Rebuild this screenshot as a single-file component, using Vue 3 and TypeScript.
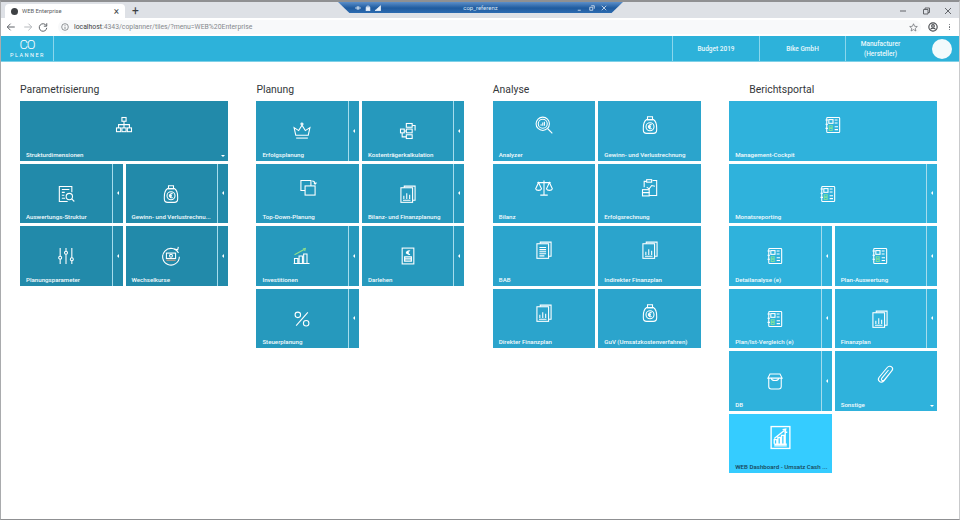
<script setup lang="ts">
type Tile = { label: string; icon: string; side?: boolean; caret?: boolean; wide?: boolean; accent?: boolean; big?: boolean }
type Column = { title: string; cls: string; indent?: boolean; tiles: Tile[] }

const icons: Record<string, string> = {
  tree: '<rect x="9.500" y="3" width="5" height="4.500"/><rect x="3" y="15.500" width="5" height="4.500"/><rect x="9.500" y="15.500" width="5" height="4.500"/><rect x="16" y="15.500" width="5" height="4.500"/><path d="M12 7.500v8M5.500 15.500v-4h13v4"/>',
  report: '<path d="M19 10V3H4v18h10"/><path d="M7 6.500h9M7 10h3.500M7 13.500h3M7 17h4"/><circle cx="16" cy="15" r="3.800"/><path d="M18.800 17.800l3.200 3.200"/>',
  bag: '<path d="M9 2h6v3.500H9z"/><path d="M8 5.500h8C18.500 7 20 11 20 15.500v2.500a4 4 0 0 1-4 4H8a4 4 0 0 1-4-4v-2.500C4 11 5.500 7 8 5.500z"/><circle cx="12" cy="14" r="4.800"/><path d="M14 11.800c-2-1-3.600.4-3.600 2.200s1.600 3.200 3.600 2.200M9.500 13.300h3.500M9.500 14.700h3.500"/>',
  sliders: '<path d="M5 2.500v19M12 2.500v19M19 2.500v19"/><circle cx="5" cy="14" r="1.800" fill="#228aaa"/><circle cx="12" cy="8" r="1.800" fill="#228aaa"/><circle cx="19" cy="16" r="1.800" fill="#228aaa"/>',
  fx: '<path d="M21 8.500A10 10 0 1 0 22 13"/><path d="M16 3.500l4 1 .8-3.500"/><rect x="6.500" y="8.500" width="11" height="6.500"/><circle cx="12" cy="11.700" r="1.700"/><path d="M6.500 17h11" stroke="#e0a080"/>',
  crown: '<path d="M4.500 17L2.500 8l5.500 3.500L12 5l4 6.500L21.500 8l-2 9z"/><path d="M5 20.500h14"/><circle cx="12" cy="3.500" r="1.200"/>',
  flow: '<rect x="10" y="3" width="7" height="4.500"/><rect x="10" y="9.700" width="7" height="4.500"/><rect x="10" y="16.500" width="7" height="4.500"/><rect x="3" y="9.700" width="4.500" height="4.500"/><path d="M17 5.300h3.500v6M7.500 12H10M5 14.500v4.500h5"/>',
  copy: '<path d="M8.500 15H3.500V3h12v6.500"/><rect x="8.500" y="9.500" width="12" height="11"/><path d="M17 3.500c2 0 3.300 1.300 3.500 3.500M19 5.500l1.500 1.800 1.700-1.800"/>',
  stack: '<path d="M7.500 4.500V2.500h13v17h-3"/><rect x="3.500" y="4.500" width="14" height="17.500"/><path d="M7 18v-4M10.500 18v-7M14 18v-5M6 19.500h9"/>',
  growth: '<path d="M3 21v-6h4v6zM8.500 21V12h4v9zM14 21V9.500h4V21zM2 21h19"/><path d="M3 10.500l12-6.500" stroke="#8fe08a"/><path d="M13 3.500l3-.5-.8 3" stroke="#8fe08a"/>',
  loan: '<rect x="5" y="2.500" width="14" height="19"/><path d="M14.500 6c-2-.8-3.500.3-3.500 1.900s1.500 2.700 3.500 1.900M9.500 7.300h3.500M9.500 8.500h3.500"/><path d="M8 13h8v5H8zM8 15.500h8" stroke-width="1.500"/>',
  percent: '<path d="M19 4L5 20"/><circle cx="7" cy="7" r="3.300"/><circle cx="17" cy="17" r="3.300"/>',
  analyzer: '<circle cx="10.500" cy="10.500" r="8"/><circle cx="10.500" cy="10.500" r="5.400"/><path d="M8.500 13v-2M10.500 13V9M12.500 13V8"/><path d="M16.500 16.500l5.500 5.500"/>',
  scale: '<path d="M12 3v17M7.500 20.500h9M4 5.500h16"/><path d="M5.500 5.500L2 13c.8 2.400 6.200 2.400 7 0zM18.500 5.500L15 13c.8 2.400 6.200 2.400 7 0z"/>',
  clip: '<path d="M8 4H5v7M15 3h5v18h-9"/><rect x="8" y="2" width="6" height="3"/><path d="M8 11l3 2 3-4 4 1"/><rect x="3" y="14" width="8" height="3.500"/><rect x="3" y="17.500" width="8" height="4"/>',
  doc: '<path d="M7.500 4.500V2.500h13v17h-3"/><rect x="3.500" y="4.500" width="14" height="17.500"/><path d="M6.500 9h8M6.500 11.500h8M6.500 14h8M6.500 16.500h8M6.500 19h6"/>',
  dash: '<rect x="4.500" y="3" width="15.500" height="18" rx="1"/><path d="M3 6h3M3 11h3M3 16h3"/><rect x="7" y="5.500" width="5" height="4.500"/><path d="M14 6h3.500M14 9.500h3.500M14 14h4M14 17.500h4"/><path d="M7.500 12.800h3.500v2.500H7.500zM7.500 16h3.500v2.500H7.500z" stroke="#7be0a0"/>',
  basket: '<path d="M6 3.500h12l2.500 5H3.500z"/><path d="M4.500 8.500v10a3 3 0 0 0 3 3h9a3 3 0 0 0 3-3v-10"/><path d="M7.500 8.500c.5 3.800 8.500 3.800 9 0"/>',
  paperclip: '<path d="M20 5.500L9.500 19c-1.400 1.800-4 2-5.400.7-1.500-1.300-1.500-3.400-.3-5L13.500 3c1.500-1.800 4-2 5.300-.8 1.500 1.300 1.300 3.300.2 4.700L9.800 18c-.8 1-2 1-2.800.3-.7-.7-.7-1.700 0-2.600l8-9.700"/>',
  board: '<rect x="3" y="1.500" width="18" height="21"/><path d="M6 18v-4h2.500v4M9.500 18v-6h2.500v6M13 18v-8h2.500v8M16.500 18V7h2M6 20h12M6 18.500h12M6 13l10-8"/><path d="M14 4.500l3-.5-.5 3"/>',
}

const columns: Column[] = [
  { title: 'Parametrisierung', cls: 'shade-1', tiles: [
    { label: 'Strukturdimensionen', icon: 'tree', wide: true, caret: true },
    { label: 'Auswertungs-Struktur', icon: 'report', side: true },
    { label: 'Gewinn- und Verlustrechnu...', icon: 'bag', side: true },
    { label: 'Planungsparameter', icon: 'sliders', side: true },
    { label: 'Wechselkurse', icon: 'fx', side: true },
  ] },
  { title: 'Planung', cls: 'shade-2', tiles: [
    { label: 'Erfolgsplanung', icon: 'crown', side: true },
    { label: 'Kostenträgerkalkulation', icon: 'flow', side: true },
    { label: 'Top-Down-Planung', icon: 'copy' },
    { label: 'Bilanz- und Finanzplanung', icon: 'stack', side: true },
    { label: 'Investitionen', icon: 'growth', side: true },
    { label: 'Darlehen', icon: 'loan', side: true },
    { label: 'Steuerplanung', icon: 'percent', side: true },
  ] },
  { title: 'Analyse', cls: 'shade-3', tiles: [
    { label: 'Analyzer', icon: 'analyzer' },
    { label: 'Gewinn- und Verlustrechnung', icon: 'bag' },
    { label: 'Bilanz', icon: 'scale' },
    { label: 'Erfolgsrechnung', icon: 'clip' },
    { label: 'BAB', icon: 'doc' },
    { label: 'Indirekter Finanzplan', icon: 'stack' },
    { label: 'Direkter Finanzplan', icon: 'stack' },
    { label: 'GuV (Umsatzkostenverfahren)', icon: 'bag' },
  ] },
  { title: 'Berichtsportal', cls: 'shade-4', indent: true, tiles: [
    { label: 'Management-Cockpit', icon: 'dash', wide: true },
    { label: 'Monatsreporting', icon: 'dash', wide: true, side: true },
    { label: 'Detailanalyse (e)', icon: 'dash', side: true },
    { label: 'Plan-Auswertung', icon: 'dash', side: true },
    { label: 'Plan/Ist-Vergleich (e)', icon: 'dash', side: true },
    { label: 'Finanzplan', icon: 'stack', side: true },
    { label: 'DB', icon: 'basket', side: true },
    { label: 'Sonstige', icon: 'paperclip', caret: true },
    { label: 'WEB Dashboard - Umsatz Cash ...', icon: 'board', accent: true, big: true },
  ] },
]
</script>

<template>
  <div class="window">
    <div class="tabstrip">
      <div class="tab">
        <span class="favicon"></span>
        <span class="tab-title">WEB Enterprise</span>
        <span class="tab-close">×</span>
      </div>
      <span class="tab-plus">+</span>
      <div class="winctl">
        <svg viewBox="0 0 8 8" width="8" height="8"><path d="M1 4h6" /></svg>
        <svg viewBox="0 0 8 8" width="8" height="8"><path d="M1.500 2.500h4.500v4.500h-4.500zM3 2.500V1h4.500v4.500H6" /></svg>
        <svg viewBox="0 0 8 8" width="8" height="8"><path d="M1 1l6 6M7 1l-6 6" /></svg>
      </div>
    </div>

    <div class="remote">
      <div class="remote-left">
        <svg viewBox="0 0 8 8" width="6" height="6"><path d="M0 4h8M3 1.500v5M5 1.500v5" /></svg>
        <svg viewBox="0 0 8 8" width="6" height="6"><rect x="1.500" y="3.500" width="5" height="4" class="solid" /><path d="M2.500 3.500V1.500h3v2" /></svg>
        <svg viewBox="0 0 8 8" width="6" height="6"><path d="M0 7.500L7.500 1v6.500z" class="solid" /></svg>
      </div>
      <span class="remote-title">cop_referenz</span>
      <div class="remote-right">
        <svg viewBox="0 0 8 8" width="6" height="6"><path d="M1 7h4" /></svg>
        <svg viewBox="0 0 8 8" width="6" height="6"><path d="M1 3h4v4H1zM3 1h4v4" /></svg>
        <svg viewBox="0 0 8 8" width="6" height="6"><path d="M1 1l6 6M7 1L1 7" /></svg>
      </div>
    </div>

    <div class="toolbar">
      <svg class="nav" viewBox="0 0 12 12" width="10" height="10"><path d="M10.500 6h-9M5.500 2l-4 4 4 4" /></svg>
      <svg class="nav off" viewBox="0 0 12 12" width="10" height="10"><path d="M1.500 6h9M6.500 2l4 4-4 4" /></svg>
      <svg class="nav reload" viewBox="0 0 12 12" width="10" height="10"><path d="M10 4.500A4.500 4.500 0 1 0 10.500 7M10.500 1.500v3.500H7" /></svg>
      <div class="omnibox">
        <svg class="info" viewBox="0 0 12 12" width="8" height="8"><circle cx="6" cy="6" r="5" /><path d="M6 5.500v3.500M6 3v1.200" /></svg>
        <span class="url"><b>localhost</b>:4343/coplanner/tiles/?menu=WEB%20Enterprise</span>
        <svg class="star" viewBox="0 0 12 12" width="9" height="9"><path d="M6 1l1.500 3.400 3.600.3-2.700 2.400.8 3.600L6 8.800l-3.200 1.900.8-3.600L.9 4.700l3.600-.3z" /></svg>
      </div>
      <svg class="nav profile" viewBox="0 0 12 12" width="10" height="10"><circle cx="6" cy="6" r="5" /><circle cx="6" cy="4.700" r="1.600" class="dark" /><path d="M2.800 9c1.500-2 4.900-2 6.400 0" /></svg>
      <span class="dots"><i></i><i></i><i></i></span>
    </div>

    <header class="appbar">
      <div class="logo">
        <span class="logo-co">CO</span>
        <span class="logo-name">PLANNER</span>
      </div>
      <div class="spacer"></div>
      <div class="cell budget">Budget 2019</div>
      <div class="cell firm">Bike GmbH</div>
      <div class="cell role">Manufacturer<br />(Hersteller)</div>
      <div class="avatar-wrap"><span class="avatar"></span></div>
    </header>

    <main class="board">
      <section v-for="col in columns" :key="col.title" class="column" :class="col.cls">
        <h2 class="col-title" :class="{ indented: col.indent }">{{ col.title }}</h2>
        <div class="tiles">
          <article
            v-for="tile in col.tiles"
            :key="tile.label"
            class="tile"
            :class="{ wide: tile.wide, accent: tile.accent, sided: tile.side }"
          >
            <div class="tile-main">
              <svg
                class="tile-icon"
                :class="{ big: tile.big }"
                viewBox="0 0 24 24"
                fill="none"
                stroke="#fff"
                stroke-width="1.300"
                v-html="icons[tile.icon]"
              ></svg>
              <span class="tile-label">{{ tile.label }}</span>
              <span v-if="tile.caret" class="caret-down"></span>
            </div>
            <div v-if="tile.side" class="tile-side"><span class="caret-left"></span></div>
          </article>
        </div>
      </section>
    </main>
  </div>
</template>

<style>
html, body { margin: 0; background: #fff; }
</style>

<style scoped>
.window {
  position: relative;
  width: 960px;
  height: 520px;
  box-sizing: border-box;
  overflow: hidden;
  background: #fff;
  border-top: 2px solid #8f9092;
  border-left: 1px solid #a9abad;
  border-right: 1px solid #c9cacc;
  border-bottom: 1px solid #8f9092;
  font-family: Roboto, "Liberation Sans", sans-serif;
  display: flex;
  flex-direction: column;
}

.tabstrip {
  height: 16px;
  background: #dee1e6;
  display: flex;
  align-items: flex-end;
  flex: none;
}
.tab {
  margin-left: 4px;
  width: 120px;
  height: 14px;
  box-sizing: border-box;
  background: #fff;
  border-radius: 4px 4px 0 0;
  display: flex;
  align-items: center;
  padding: 0 6px 0 6px;
  color: #5a5d61;
  font-size: 5.800px;
}
.favicon { width: 7px; height: 7px; border-radius: 50%; background: #3e4144; margin-right: 4px; }
.tab-title { flex: 1; }
.tab-close { font-size: 10px; color: #45484c; }
.tab-plus { margin: 0 0 0 7px; font-size: 12px; line-height: 14px; color: #3c4043; }
.winctl { margin-left: auto; height: 14px; display: flex; align-items: center; gap: 14.500px; padding-right: 7px; }
.winctl svg { fill: none; stroke: #55585c; stroke-width: 0.900; }

.remote {
  position: absolute;
  top: 0;
  left: 337px;
  width: 285px;
  height: 11px;
  background: linear-gradient(#5c8fc9, #1f5b9f 55%, #2c6bb0);
  clip-path: polygon(0 0, 100% 0, 96% 100%, 4% 100%);
  display: flex;
  align-items: center;
  justify-content: center;
  color: #dbe7f5;
  font-size: 6px;
}
.remote-title { position: relative; }
.remote-left, .remote-right { position: absolute; top: 2.500px; display: flex; gap: 4px; }
.remote-left { left: 17px; }
.remote-right { right: 16px; gap: 6px; }
.remote svg { fill: none; stroke: #eaf1fa; stroke-width: 1; }
.remote svg .solid { fill: #eaf1fa; }

.toolbar {
  height: 18px;
  flex: none;
  background: #fff;
  display: flex;
  align-items: center;
  padding: 0 9px 0 5px;
  gap: 7px;
}
.nav { fill: none; stroke: #5f6368; stroke-width: 1.200; flex: none; }
.nav.off { stroke: #b6b9bd; }
.nav.reload { margin-left: -2px; }
.omnibox {
  flex: 1;
  height: 14px;
  margin-left: 3px;
  padding: 0 3.500px 0 3px;
  border-radius: 7px;
  background: #f8f9fa;
  display: flex;
  align-items: center;
  gap: 5px;
  font-size: 6.850px;
  color: #85888c;
}
.info { fill: none; stroke: #5f6368; stroke-width: 1; flex: none; }
.url { flex: 1; white-space: nowrap; }
.url b { font-weight: 400; color: #3c4043; }
.star { fill: none; stroke: #5f6368; stroke-width: 0.900; }
.profile { fill: none; stroke: #4a4d51; stroke-width: 1.400; margin-right: 3.500px; }
.dots { display: flex; flex-direction: column; gap: 1px; }
.dots i { display: block; width: 1.500px; height: 1.500px; border-radius: 50%; background: #5f6368; }

.appbar {
  height: 25px;
  flex: none;
  background: #2db2da;
  color: #e9f8fc;
  font-size: 6.500px;
  display: flex;
  box-shadow: 0 1px 0 #7fd0e7;
}
.logo {
  width: 53px;
  box-sizing: border-box;
  border-right: 1px solid #8bd6ec;
  display: flex;
  flex-direction: column;
  align-items: center;
  color: #fff;
  padding-top: 3px;
}
.logo-co { font-size: 13px; line-height: 12px; font-weight: 300; letter-spacing: -1px; }
.logo-name { font-size: 5.500px; line-height: 8px; letter-spacing: 1.500px; margin-right: -1px; }
.spacer { flex: 1; }
.cell {
  box-sizing: border-box;
  border-left: 1px solid #8bd6ec;
  display: flex;
  align-items: center;
  justify-content: center;
  text-align: center;
  line-height: 10px;
  font-weight: 500;
}
.budget { width: 87px; }
.firm { width: 86px; }
.role { width: 70px; }
.avatar-wrap { width: 44px; display: flex; align-items: center; padding-left: 17px; box-sizing: border-box; }
.avatar { width: 20px; height: 20px; border-radius: 50%; background: #f2fafc; flex: none; }

.board {
  display: grid;
  grid-template-columns: repeat(4, 208px);
  column-gap: 28.400px;
  padding: 20px 0 0 19px;
  align-items: start;
}
.col-title {
  margin: 0 0 4px;
  height: 16px;
  line-height: 17px;
  font-size: 10.400px;
  font-weight: 400;
  color: #33373a;
}
.col-title.indented { padding-left: 20px; }
.tiles {
  display: grid;
  grid-template-columns: 1fr 1fr;
  grid-auto-rows: 59.500px;
  gap: 3px;
}
.tile { display: flex; color: #f4fbfd; min-width: 0; }
.tile.wide { grid-column: 1 / -1; }
.tile-main {
  position: relative;
  flex: 1;
  min-width: 0;
  display: flex;
  flex-direction: column;
  align-items: center;
  padding-top: 14px;
  box-sizing: border-box;
}
.tile.sided .tile-main { padding-top: 20px; }
.tile-icon { width: 20px; height: 20px; flex: none; }
.tile-icon.big { width: 25px; height: 25px; margin-top: -3px; }
.tile-label {
  position: absolute;
  left: 6px;
  bottom: 1px;
  font-size: 6.150px;
  line-height: 9px;
  font-weight: 500;
  white-space: nowrap;
}
.tile-side {
  width: 11px;
  box-sizing: border-box;
  flex: none;
  border-left: 1px solid #a6dcec;
  display: flex;
  align-items: center;
  justify-content: center;
}
.caret-left { border: 2px solid transparent; border-right-color: #fff; border-left-width: 0; }
.caret-down {
  position: absolute;
  right: 3px;
  bottom: 4px;
  border: 2px solid transparent;
  border-top-color: #fff;
  border-bottom-width: 0;
}

.shade-1 .tile-main, .shade-1 .tile-side { background: #228aaa; }
.shade-2 .tile-main, .shade-2 .tile-side { background: #2699bd; }
.shade-3 .tile-main, .shade-3 .tile-side { background: #2ba4cc; }
.shade-4 .tile-main, .shade-4 .tile-side { background: #2fb2dc; }
.shade-4 .tile.accent .tile-main { background: #35ccff; }
.tile.accent { color: #17475a; }
</style>
